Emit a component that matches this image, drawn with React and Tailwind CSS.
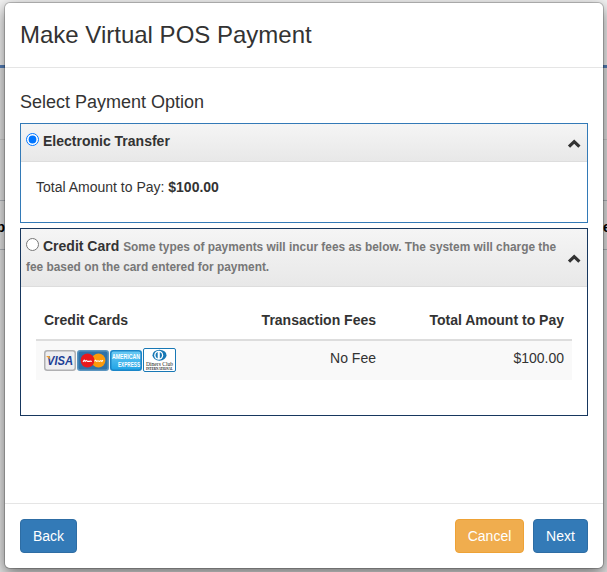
import { useState } from "react";

function Chevron() {
  return (
    <svg className="w-[14px] h-[10px] shrink-0" viewBox="0 0 14 10">
      <path d="M2 8.7 L7.2 3.7 L12.4 8.7" fill="none" stroke="#333" strokeWidth="3.2" />
    </svg>
  );
}

function VisaCard() {
  return (
    <svg className="w-8 h-[21px]" viewBox="0 0 32 21">
      <rect x="0.75" y="0.75" width="30.5" height="19.5" rx="2.5" fill="#eeeef0" stroke="#b0b0b2" strokeWidth="1.5" />
      <text x="3" y="15" fontFamily="Liberation Sans, sans-serif" fontSize="12.5" fontWeight="bold" fontStyle="italic" fill="#1d3f96" textLength="26" lengthAdjust="spacingAndGlyphs">
        VISA
      </text>
      <path d="M2 6h3.4l1 3.5z" fill="#f0a030" />
    </svg>
  );
}

function MasterCard() {
  return (
    <svg className="w-8 h-[21px]" viewBox="0 0 32 21">
      <rect x="0.75" y="0.75" width="30.5" height="19.5" rx="2.5" fill="#2f72a8" stroke="#5b95bf" strokeWidth="1.5" />
      <circle cx="21.5" cy="10.5" r="6.9" fill="#fb9a0c" />
      <circle cx="10.5" cy="10.5" r="6.9" fill="#e8191d" />
      {/* At this size the wordmark is only a broken white stroke */}
      <path d="M6 11.8l1.2-1.6 1 1.2 1-1 1.4 1h1.6l1.4-.4 1.2.5M17.5 11.4l1-1.2 1.2 1.2 1.3-.6 1.4.6 1.5-.8 1 .8 1-1.2" fill="none" stroke="#fff" strokeWidth="1.1" />
    </svg>
  );
}

function AmexCard() {
  return (
    <svg className="w-8 h-[21px]" viewBox="0 0 32 21">
      <defs>
        <linearGradient id="amex" x1="0" y1="0" x2="0" y2="1">
          <stop offset="0" stopColor="#6ccbf4" />
          <stop offset="1" stopColor="#1fa3e6" />
        </linearGradient>
      </defs>
      <rect x="0.75" y="0.75" width="30.5" height="19.5" rx="2.5" fill="url(#amex)" stroke="#1a86c8" strokeWidth="1.5" />
      <g fontFamily="Liberation Sans, sans-serif" fontSize="6.8" fontWeight="bold" fill="#fff">
        <text x="2" y="9" textLength="28" lengthAdjust="spacingAndGlyphs">AMERICAN</text>
        <text x="8" y="16.5" textLength="22" lengthAdjust="spacingAndGlyphs">EXPRESS</text>
      </g>
    </svg>
  );
}

function DinersCard() {
  return (
    <svg className="w-[33px] h-6 mb-0.5" viewBox="0 0 33 24">
      <rect x="0.5" y="0.5" width="32" height="23" rx="1.5" fill="#fff" stroke="#1878b5" />
      <ellipse cx="16.5" cy="7.2" rx="7" ry="5.5" fill="#1878b5" />
      <circle cx="15.7" cy="7.2" r="4.5" fill="#fff" />
      <path d="M14.7 4a3.4 3.4 0 0 0 0 6.4zM16.8 4a3.4 3.4 0 0 1 0 6.4z" fill="#1878b5" />
      <g fontFamily="Liberation Serif, serif" fill="#222">
        <text x="3" y="17.8" fontSize="6.2" textLength="27" lengthAdjust="spacingAndGlyphs">Diners Club</text>
        <text x="3" y="22" fontSize="3" fontWeight="bold" textLength="27" lengthAdjust="spacingAndGlyphs">INTERNATIONAL</text>
      </g>
    </svg>
  );
}

function Radio({ checked, onChange }) {
  return (
    <input
      type="radio"
      name="paymentOption"
      checked={checked}
      onChange={onChange}
      className="w-[13px] h-[13px] m-0 mr-1 align-[0px] accent-[#0075ff]"
    />
  );
}

// The page that stays visible around the dialog
function Backdrop() {
  return (
    <div className="absolute inset-0 bg-[#e6e6e6]">
      <div className="h-[65px] bg-[#f4f4f4]" />
      <div className="h-[3px] bg-[#5580bb]" />
      <div className="h-[71px]" />
      <div className="h-[61px] border-t border-[#cfcfcf]" />
      <div className="flex items-center justify-between h-[50px] pt-1 border-y border-[#b3b7bd] text-sm font-bold text-black">
        <span className="flex justify-end w-[5px] overflow-hidden">p</span>
        <span className="w-[4px] overflow-hidden">e</span>
      </div>
    </div>
  );
}

export default function App() {
  const [option, setOption] = useState("transfer");

  return (
    <div className="relative w-[607px] h-[572px] overflow-hidden font-['Liberation_Sans',Arial,sans-serif] text-[14px] leading-5 text-[#333]">
      <Backdrop />
      <div className="relative flex flex-col w-[600px] h-[567px] ml-1 mt-[2px] bg-white bg-clip-padding border border-black/20 rounded-md shadow-[0_5px_15px_rgba(0,0,0,0.5)]">
        <div className="h-[65px] px-[15px] pt-[15px] border-b border-[#e5e5e5]">
          <h4 className="text-[24px] leading-[34px]">Make Virtual POS Payment</h4>
        </div>

        <div className="flex-1 px-[15px] pt-[24px]">
          <h4 className="mb-[11px] text-[18px] leading-5">Select Payment Option</h4>

          {/* Electronic transfer */}
          <div className="h-[100px] mb-[5px] border border-[#337ab7]">
            <div className="flex items-center justify-between h-[38px] pl-[5px] pr-[6px] bg-linear-to-b from-[#f5f5f5] to-[#e8e8e8] border-b border-[#ddd]">
              <label className="-mt-[3px] font-bold">
                <Radio checked={option === "transfer"} onChange={() => setOption("transfer")} />
                Electronic Transfer
              </label>
              <Chevron />
            </div>
            <div className="p-[15px]">
              Total Amount to Pay: <strong>$100.00</strong>
            </div>
          </div>

          {/* Credit card */}
          <div className="h-[188px] border border-[#17375e]">
            <div className="flex items-center justify-between h-[58px] pl-[5px] pr-[6px] bg-linear-to-b from-[#f5f5f5] to-[#e8e8e8] border-b border-[#ddd]">
              <label className="-mt-px font-bold leading-[19px] whitespace-nowrap">
                <Radio checked={option === "card"} onChange={() => setOption("card")} />
                Credit Card{" "}
                <span className="text-[11.9px] text-[#777]">
                  Some types of payments will incur fees as below. The system will charge the
                  <br />
                  fee based on the card entered for payment.
                </span>
              </label>
              <Chevron />
            </div>
            <div className="p-[15px]">
              <table className="w-full table-fixed">
                <thead>
                  <tr className="h-[38px] border-b-2 border-[#ddd]">
                    <th className="w-[160px] px-2 pb-0.5 text-left">Credit Cards</th>
                    <th className="w-[188px] px-2 pb-0.5 text-right">Transaction Fees</th>
                    <th className="px-2 pb-0.5 text-right">Total Amount to Pay</th>
                  </tr>
                </thead>
                <tbody>
                  <tr className="h-[40px] bg-[#f9f9f9]">
                    <td className="px-2">
                      <div className="flex items-center gap-px">
                        <VisaCard />
                        <MasterCard />
                        <AmexCard />
                        <DinersCard />
                      </div>
                    </td>
                    <td className="px-2 pb-1.5 text-right">No Fee</td>
                    <td className="px-2 pb-1.5 text-right">$100.00</td>
                  </tr>
                </tbody>
              </table>
            </div>
          </div>
        </div>

        <div className="flex h-[65px] px-[15px] pt-[15px] border-t border-[#e5e5e5] text-white">
          <button className="w-[57px] h-[34px] bg-[#337ab7] border border-[#2e6da4] rounded">Back</button>
          <button className="w-[69px] h-[34px] ml-auto mr-[9px] bg-[#f0ad4e] border border-[#eea236] rounded">Cancel</button>
          <button className="w-[55px] h-[34px] bg-[#337ab7] border border-[#2e6da4] rounded">Next</button>
        </div>
      </div>
    </div>
  );
}
